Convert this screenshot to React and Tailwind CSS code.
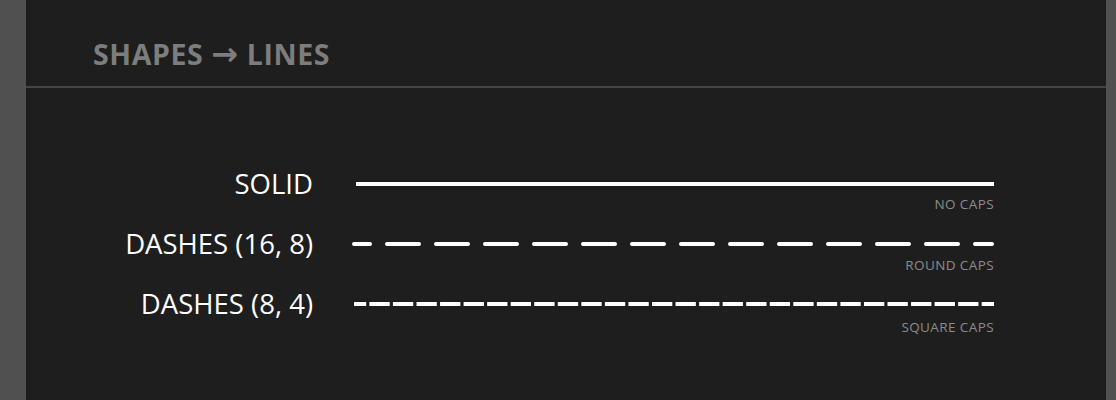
import React from 'react';

const LINE_ROWS = [
  { label: 'SOLID', caption: 'NO CAPS', kind: 'solid', captionGap: 'mt-0' },
  { label: 'DASHES (16, 8)', caption: 'ROUND CAPS', kind: 'round', captionGap: 'mt-[1px]' },
  { label: 'DASHES (8, 4)', caption: 'SQUARE CAPS', kind: 'square', captionGap: 'mt-[3px]' },
];

function LineSample({ kind }) {
  // svg spans x 340..1000 of the page
  if (kind === 'solid') {
    return (
      <svg width="660" height="8" className="block">
        <line x1="16" y1="4" x2="654" y2="4" stroke="#fff" strokeWidth="4" strokeLinecap="butt" />
      </svg>
    );
  }
  if (kind === 'round') {
    return (
      <svg width="660" height="8" className="block">
        <line
          x1="14" y1="4" x2="652" y2="4"
          stroke="#fff" strokeWidth="4" strokeLinecap="round"
          strokeDasharray="32 17" strokeDashoffset="16"
        />
      </svg>
    );
  }
  return (
    <svg width="660" height="8" className="block">
      <line
        x1="16" y1="4" x2="652" y2="4"
        stroke="#fff" strokeWidth="4" strokeLinecap="square"
        strokeDasharray="16.3 7.25" strokeDashoffset="8.15"
      />
    </svg>
  );
}

export default function App() {
  return (
    <div
      className="w-[1116px] h-[400px] bg-[#505050] flex overflow-hidden"
      style={{ fontFamily: '"Open Sans", "Noto Sans", "DejaVu Sans", sans-serif' }}
    >
      <div className="ml-[26px] w-[1080px] h-full bg-[#1e1e1e] flex flex-col">
        <div className="h-[88px] border-b-2 border-[#454545] pl-[67px] pt-[34px]">
          <h1 className="text-[28.5px] leading-[38px] font-bold text-[#7d7d7d] tracking-[0.6px]">
            SHAPES <span className="text-[32px]">→</span> LINES
          </h1>
        </div>

        <div className="pt-[82px] flex flex-col">
          {LINE_ROWS.map((row) => (
            <div key={row.label} className="h-[60px] flex flex-col">
              <div className="h-[28px] flex items-center">
                <span className="w-[287px] text-right text-[27.5px] leading-[28px] text-white shrink-0">
                  {row.label}
                </span>
                <div className="ml-[27px]">
                  <LineSample kind={row.kind} />
                </div>
              </div>
              <div className={`w-[968px] text-right text-[13.5px] leading-[12px] tracking-[0.4px] text-[#8c8c8c] ${row.captionGap}`}>
                {row.caption}
              </div>
            </div>
          ))}
        </div>
      </div>
    </div>
  );
}
